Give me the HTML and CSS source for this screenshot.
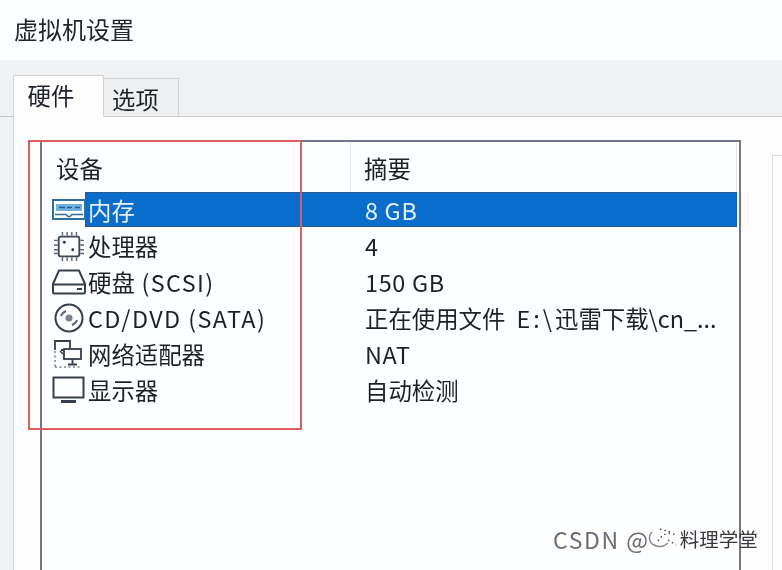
FILE: index.html
```html
<!DOCTYPE html>
<html lang="zh-CN">
<head>
<meta charset="utf-8">
<title>虚拟机设置</title>
<link rel="stylesheet" href="styles.css">
</head>
<body>
<div class="window">
  <header class="titlebar">虚拟机设置</header>
  <div class="tabs-area">
    <div class="tab tab-active">硬件</div>
    <div class="tab tab-idle">选项</div>
  </div>
  <main class="panel">
    <section class="table">
      <div class="thead">
        <div class="th th-device">设备</div>
        <div class="th th-summary">摘要</div>
      </div>
      <div class="row selected">
        <div class="c-device">
          <svg class="ico" viewBox="0 0 34 24"><rect x="1" y="2" width="32" height="19" fill="none" stroke="#2f6f9f" stroke-width="2"/><rect x="4" y="6" width="26" height="7" fill="#6fb0de"/><path d="M7 9.500h6M15 9.500h5M23 9.500h5" stroke="#1c5c92" stroke-width="1.500"/><path d="M3 16.500h11l2 2h2l2-2h11" fill="none" stroke="#2f6f9f" stroke-width="1.500"/></svg>
          <span class="name">内存</span>
        </div>
        <div class="c-summary"><span class="lat">8 GB</span></div>
      </div>
      <div class="row">
        <div class="c-device">
          <svg class="ico" viewBox="0 0 34 32"><rect x="6" y="6" width="22" height="21" rx="2" fill="none" stroke="#3c4658" stroke-width="2"/><circle cx="12" cy="12" r="1.500" fill="#2a3242"/><circle cx="21" cy="20" r="1.500" fill="#2a3242"/><path d="M10 1v4M15 1v4M20 1v4M25 1v4M10 28v4M15 28v4M20 28v4M25 28v4M1 10h4M1 15h4M1 20h4M1 24h4M29 10h4M29 15h4M29 20h4M29 24h4" stroke="#5a6474" stroke-width="1.500"/></svg>
          <span class="name">处理器</span>
        </div>
        <div class="c-summary">4</div>
      </div>
      <div class="row">
        <div class="c-device">
          <svg class="ico" viewBox="0 0 34 26"><path d="M7 1.500h20l6 13.500v8a1.500 1.500 0 0 1-1.500 1.500h-29a1.500 1.500 0 0 1-1.500-1.500v-8z" fill="none" stroke="#353e4e" stroke-width="2"/><path d="M1 15.500h32" stroke="#353e4e" stroke-width="2"/><path d="M25 20h5" stroke="#353e4e" stroke-width="2"/></svg>
          <span class="name">硬盘<span class="lat-wide"> (SCSI)</span></span>
        </div>
        <div class="c-summary"><span class="lat">150 GB</span></div>
      </div>
      <div class="row">
        <div class="c-device">
          <svg class="ico" viewBox="0 0 34 30"><circle cx="17" cy="15" r="13.500" fill="none" stroke="#353e4e" stroke-width="2"/><circle cx="17" cy="15" r="3.500" fill="#7b8390"/><path d="M9 13a8.500 8.500 0 0 1 5-5M25 17a8.500 8.500 0 0 1-5 5" fill="none" stroke="#5a6474" stroke-width="2"/></svg>
          <span class="name"><span class="lat-wide">CD/DVD (SATA)</span></span>
        </div>
        <div class="c-summary">正在使用文件 <span class="lat-path">E:\</span>迅雷下载\cn_...</div>
      </div>
      <div class="row">
        <div class="c-device">
          <svg class="ico" viewBox="0 0 34 30"><path d="M3 11v-9h15v9h-9" fill="none" stroke="#353e4e" stroke-width="1.800"/><rect x="12" y="10" width="17" height="10" fill="#fdfeff" stroke="#353e4e" stroke-width="1.800"/><path d="M20.500 20v5M16 25.500h9" stroke="#353e4e" stroke-width="1.800"/><path d="M3 12v16M3 28h26" fill="none" stroke="#7b8390" stroke-width="1.500" stroke-dasharray="2 2.500"/><path d="M8 12l3 3" stroke="#353e4e" stroke-width="1.500"/></svg>
          <span class="name">网络适配器</span>
        </div>
        <div class="c-summary"><span class="lat">NAT</span></div>
      </div>
      <div class="row">
        <div class="c-device">
          <svg class="ico" viewBox="0 0 34 28"><rect x="1.500" y="1.500" width="30" height="20" fill="none" stroke="#353e4e" stroke-width="2"/><path d="M9 25.500h15" stroke="#353e4e" stroke-width="3"/></svg>
          <span class="name">显示器</span>
        </div>
        <div class="c-summary">自动检测</div>
      </div>
    </section>
    <aside class="side"></aside>
  </main>
  <div class="highlight"></div>
  <div class="watermark">
    <span class="wm-csdn">CSDN @</span>
    <svg class="wm-icon" viewBox="0 0 34 26"><path d="M6 6a8 8 0 0 0 2 13c5 3 11 1 14-2" fill="none" stroke="#8c8a94" stroke-width="1.500"/><path d="M12 15c3-5 8-10 18-6M14 3l10 3M22 14l8 5" fill="none" stroke="#55525c" stroke-width="1.500" stroke-dasharray="1.500 3"/></svg>
    <span class="wm-name">料理学堂</span>
  </div>
</div>
</body>
</html>
```
FILE: styles.css
```css
* { box-sizing: border-box; }
html, body { margin: 0; padding: 0; }
body {
  width: 782px;
  height: 570px;
  overflow: hidden;
  background: #fdfdfe;
  color: #1d2028;
  font-family: "Noto Sans CJK SC", "Noto Sans", sans-serif;
  font-size: 23.4px;
}
.window {
  position: relative;
  width: 782px;
  height: 570px;
  display: flex;
  flex-direction: column;
  background: #f0f1f2;
  filter: blur(0.35px);
}
.titlebar {
  height: 60px;
  flex: none;
  padding: 11px 0 0 14px;
  font-size: 24px;
  line-height: 36px;
  background: #fdfeff;
  color: #23252b;
}
.tabs-area {
  height: 57px;
  flex: none;
  display: flex;
  align-items: flex-end;
  padding-left: 13px;
  border-bottom: 1px solid #c6c8ca;
}
.tab {
  text-align: center;
  line-height: 36px;
}
.tab-active {
  width: 91px;
  height: 42px;
  margin-bottom: -1px;
  padding: 1px 15px 0 0;
  background: #fdfdfe;
  border: 1px solid #cfd1d3;
  border-bottom: none;
  border-radius: 2px 2px 0 0;
  position: relative;
}
.tab-idle {
  width: 75px;
  height: 38px;
  padding: 2px 11px 0 0;
  background: #eeeff0;
  border: 1px solid #cfd1d3;
  border-left: none;
  border-bottom: none;
}
.panel {
  flex: 1;
  min-height: 0;
  display: flex;
  align-items: stretch;
  margin-left: 13px;
  padding: 23px 0 0 26px;
  background: #fdfdfe;
  border-left: 1px solid #cdcfd1;
}
.table {
  width: 701px;
  flex: none;
  padding-right: 2px;
  background: #fdfeff;
  border: 2px solid #73748e;
  border-width: 2px 2px 0 2px;
}
.thead {
  display: flex;
  height: 50px;
}
.th {
  padding-top: 8px;
  line-height: 36px;
}
.th-device {
  width: 309px;
  padding-left: 14px;
  border-right: 1px solid #e4e5e8;
}
.th-summary {
  padding-left: 13px;
  flex: 1;
  border-right: 1px solid #e4e5e8;
}
.row {
  display: flex;
  height: 36px;
  line-height: 36px;
  position: relative;
}
.c-device {
  width: 309px;
  display: flex;
  align-items: center;
  padding-left: 10px;
  flex: none;
  position: relative;
}
.ico {
  width: 34px;
  height: 30px;
  flex: none;
  margin-right: 2px;
}
.c-summary {
  padding-left: 14px;
  white-space: nowrap;
  position: relative;
}
.lat { letter-spacing: 0.7px; }
.lat-wide { letter-spacing: 1.4px; }
.lat-path { letter-spacing: 3px; margin-left: 6px; }
.selected {
  height: 35px;
  margin-bottom: 1px;
  color: #e6f2fb;
}
.selected::before {
  content: "";
  position: absolute;
  left: 43px;
  right: 0;
  top: 0;
  bottom: 0;
  background: #0a6dcb;
  border: 1px dotted #1c4f86;
}
.highlight {
  position: absolute;
  left: 28px;
  top: 140px;
  width: 274px;
  height: 290px;
  border: 2px solid #d9605f;
}
.side {
  margin: 15px 0 0 31px;
  flex: 1;
  background: #fdfdfe;
  border: 1px solid #dcdde0;
  border-right: none;
  border-bottom: none;
}
.watermark {
  position: absolute;
  left: 553px;
  top: 522px;
  display: flex;
  align-items: center;
  line-height: 34px;
  font-size: 23px;
  color: #6d6a78;
  white-space: nowrap;
}
.wm-csdn { letter-spacing: 1.6px; }
.wm-icon { width: 34px; height: 26px; margin: 0 0 0 -4px; }
.wm-name {
  font-size: 19.5px;
  color: #3a3640;
}
```
